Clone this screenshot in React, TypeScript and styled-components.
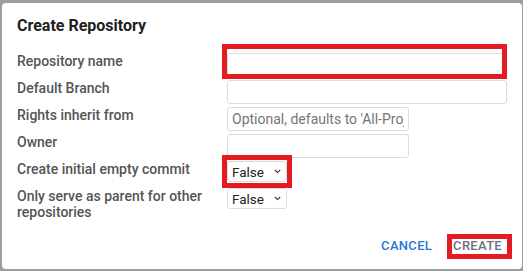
import React from "react";
import styled, { createGlobalStyle } from "styled-components";

const GlobalStyle = createGlobalStyle`
  html, body { margin: 0; padding: 0; }
  body {
    background: #9e9e9e;
    font-family: Roboto, "Liberation Sans", Arial, sans-serif;
  }
  * { box-sizing: border-box; }
`;

const Backdrop = styled.div`
  width: 523px;
  height: 271px;
  padding: 3px 1px 2px 2px;
  display: flex;
`;

const Dialog = styled.div`
  flex: 1;
  background: #fff;
  border-radius: 4px;
  display: flex;
  flex-direction: column;
  padding: 14px 12px 6px 15px;
`;

const Title = styled.h2`
  margin: 0;
  font-size: 16px;
  line-height: 18px;
  font-weight: 700;
  color: #212121;
`;

const Form = styled.div`
  margin-top: 18px;
  display: grid;
  grid-template-columns: 210px 1fr;
  row-gap: 3px;
  align-items: start;
`;

const Label = styled.label`
  font-size: 14px;
  line-height: 16px;
  font-weight: 500;
  color: #555;
  padding-right: 10px;
`;

const Field = styled.div`
  display: flex;
  min-height: 24px;
`;

const TextInput = styled.input<{ $width: number }>`
  width: ${(p) => p.$width}px;
  height: 24px;
  border: 1px solid #dcdcdc;
  border-radius: 3px;
  padding: 0 4px;
  font-family: Roboto, "Liberation Sans", Arial, sans-serif;
  font-size: 14px;
  color: #222;
  background: #fff;
  outline: none;
  &::placeholder {
    color: #767676;
  }
`;

const SelectWrap = styled.span`
  position: relative;
  display: inline-flex;
`;

const Select = styled.select`
  appearance: none;
  -webkit-appearance: none;
  width: 60px;
  height: 21px;
  border: 1px solid #dcdcdc;
  border-radius: 3px;
  padding: 0 0 0 4px;
  font-family: Roboto, "Liberation Sans", Arial, sans-serif;
  font-size: 13.5px;
  color: #222;
  background: #fff;
  outline: none;
`;

const Chevron = styled.svg`
  position: absolute;
  right: 6px;
  top: 8px;
  pointer-events: none;
`;

const Highlight = styled.span<{ $t: number; $r: number; $b: number; $l: number }>`
  position: relative;
  display: inline-flex;
  &::after {
    content: "";
    position: absolute;
    top: ${(p) => p.$t}px;
    right: ${(p) => p.$r}px;
    bottom: ${(p) => p.$b}px;
    left: ${(p) => p.$l}px;
    border: 5px solid #e41c22;
    pointer-events: none;
  }
`;

const Footer = styled.div`
  margin-top: auto;
  display: flex;
  justify-content: flex-end;
  align-items: center;
  gap: 5px;
`;

const ActionButton = styled.button<{ $color: string }>`
  background: none;
  border: none;
  padding: 6px 8px;
  font-family: Roboto, "Liberation Sans", Arial, sans-serif;
  font-size: 13px;
  line-height: 22px;
  font-weight: 500;
  letter-spacing: 0.3px;
  text-transform: uppercase;
  color: ${(p) => p.$color};
  cursor: pointer;
`;

const BoolSelect = () => (
  <SelectWrap>
    <Select defaultValue="false">
      <option value="false">False</option>
      <option value="true">True</option>
    </Select>
    <Chevron width="7" height="5" viewBox="0 0 7 5">
      <path d="M0.8 1 L3.5 3.6 L6.2 1" fill="none" stroke="#333" strokeWidth="1.1" />
    </Chevron>
  </SelectWrap>
);

export default function App() {
  return (
    <>
      <GlobalStyle />
      <Backdrop>
        <Dialog>
          <Title>Create Repository</Title>
          <Form>
            <Label>Repository name</Label>
            <Field>
              <Highlight $t={-9} $r={0} $b={-2} $l={-5}>
                <TextInput $width={280} />
              </Highlight>
            </Field>

            <Label>Default Branch</Label>
            <Field>
              <TextInput $width={280} />
            </Field>

            <Label>Rights inherit from</Label>
            <Field>
              <TextInput $width={182} placeholder="Optional, defaults to 'All-Projects'" />
            </Field>

            <Label>Owner</Label>
            <Field>
              <TextInput $width={182} />
            </Field>

            <Label>Create initial empty commit</Label>
            <Field>
              <Highlight $t={-6} $r={-5} $b={-3} $l={-5}>
                <BoolSelect />
              </Highlight>
            </Field>

            <Label>Only serve as parent for other repositories</Label>
            <Field>
              <BoolSelect />
            </Field>
          </Form>
          <Footer>
            <ActionButton $color="#1f78d1">Cancel</ActionButton>
            <Highlight $t={5} $r={-2} $b={4} $l={2}>
              <ActionButton $color="#6c7180">Create</ActionButton>
            </Highlight>
          </Footer>
        </Dialog>
      </Backdrop>
    </>
  );
}
